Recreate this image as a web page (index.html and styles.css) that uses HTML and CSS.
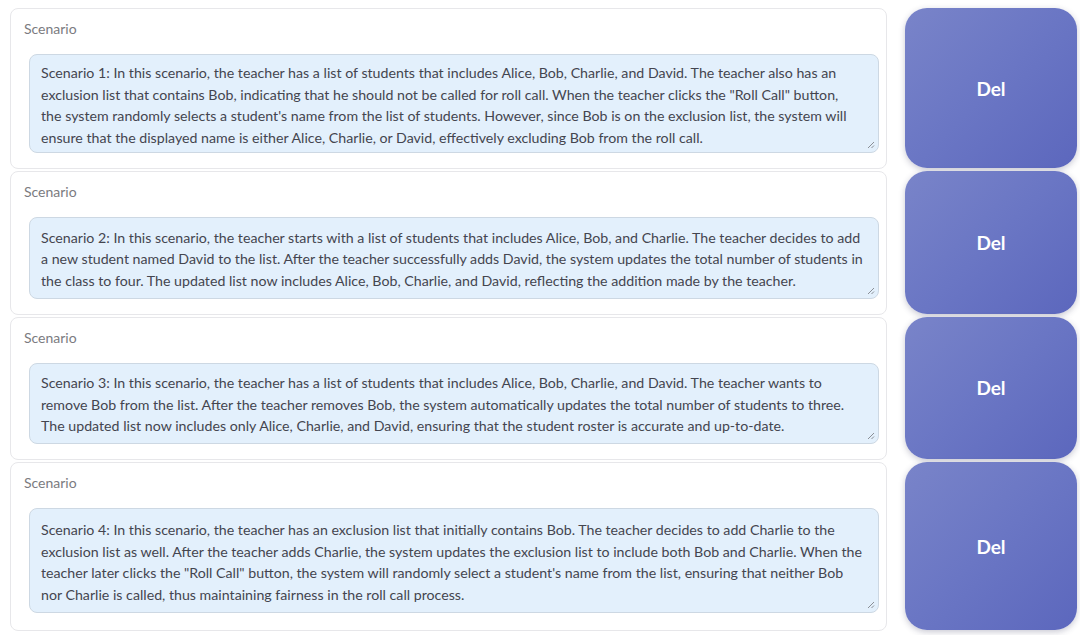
FILE: index.html
```html
<!DOCTYPE html>
<html>
<head>
<meta charset="utf-8">
<link rel="stylesheet" href="styles.css">
</head>
<body>
<div class="list">
  <div class="row">
    <div class="card">
      <div class="label">Scenario</div>
      <div class="box">
        <div class="text">Scenario 1: In this scenario, the teacher has a list of students that includes Alice, Bob, Charlie, and David. The teacher also has an<br>exclusion list that contains Bob, indicating that he should not be called for roll call. When the teacher clicks the "Roll Call" button,<br>the system randomly selects a student's name from the list of students. However, since Bob is on the exclusion list, the system will<br>ensure that the displayed name is either Alice, Charlie, or David, effectively excluding Bob from the roll call.</div>
        <svg class="grip" viewBox="0 0 8 8" width="8" height="8"><path d="M1 7L7 1M4.5 7L7 4.5" stroke="#8a8f96" stroke-width="1" fill="none"/></svg>
      </div>
    </div>
    <button class="del">Del</button>
  </div>
  <div class="row">
    <div class="card">
      <div class="label">Scenario</div>
      <div class="box short">
        <div class="text">Scenario 2: In this scenario, the teacher starts with a list of students that includes Alice, Bob, and Charlie. The teacher decides to add<br>a new student named David to the list. After the teacher successfully adds David, the system updates the total number of students in<br>the class to four. The updated list now includes Alice, Bob, Charlie, and David, reflecting the addition made by the teacher.</div>
        <svg class="grip" viewBox="0 0 8 8" width="8" height="8"><path d="M1 7L7 1M4.5 7L7 4.5" stroke="#8a8f96" stroke-width="1" fill="none"/></svg>
      </div>
    </div>
    <button class="del">Del</button>
  </div>
  <div class="row">
    <div class="card">
      <div class="label">Scenario</div>
      <div class="box short">
        <div class="text">Scenario 3: In this scenario, the teacher has a list of students that includes Alice, Bob, Charlie, and David. The teacher wants to<br>remove Bob from the list. After the teacher removes Bob, the system automatically updates the total number of students to three.<br>The updated list now includes only Alice, Charlie, and David, ensuring that the student roster is accurate and up-to-date.</div>
        <svg class="grip" viewBox="0 0 8 8" width="8" height="8"><path d="M1 7L7 1M4.5 7L7 4.5" stroke="#8a8f96" stroke-width="1" fill="none"/></svg>
      </div>
    </div>
    <button class="del">Del</button>
  </div>
  <div class="row">
    <div class="card last">
      <div class="label">Scenario</div>
      <div class="box tall">
        <div class="text">Scenario 4: In this scenario, the teacher has an exclusion list that initially contains Bob. The teacher decides to add Charlie to the<br>exclusion list as well. After the teacher adds Charlie, the system updates the exclusion list to include both Bob and Charlie. When the<br>teacher later clicks the "Roll Call" button, the system will randomly select a student's name from the list, ensuring that neither Bob<br>nor Charlie is called, thus maintaining fairness in the roll call process.</div>
        <svg class="grip" viewBox="0 0 8 8" width="8" height="8"><path d="M1 7L7 1M4.5 7L7 4.5" stroke="#8a8f96" stroke-width="1" fill="none"/></svg>
      </div>
    </div>
    <button class="del">Del</button>
  </div>
</div>
</body>
</html>
```
FILE: styles.css
```css
html, body {
  margin: 0;
  background: #ffffff;
}
body {
  font-family: Lato, "Noto Sans", sans-serif;
  padding: 8px 3px 4px 10px;
}
.list {
  display: flex;
  flex-direction: column;
  gap: 2px;
}
.row {
  display: flex;
  gap: 18px;
  align-items: stretch;
}
.card {
  flex: 1;
  min-width: 0;
  background: #fff;
  border: 1px solid #e7e7ea;
  border-radius: 8px;
  padding: 11px 7px 15px 13px;
}
.card.last {
  padding-bottom: 17px;
}
.label {
  font-size: 14px;
  line-height: 18px;
  color: #7b7b80;
  margin-bottom: 16px;
}
.box {
  position: relative;
  margin-left: 5px;
  background: #e3f0fc;
  border: 1px solid #cdd8e3;
  border-radius: 8px;
  padding: 7px 11px 4px;
}
.box.short {
  padding-top: 8.5px;
  padding-bottom: 6.5px;
}
.box.tall {
  padding-top: 10px;
  padding-bottom: 7px;
}
.text {
  font-size: 14.2px;
  line-height: 21.5px;
  color: #44454f;
  white-space: nowrap;
}
.grip {
  position: absolute;
  right: 3px;
  bottom: 3px;
}
.del {
  width: 172px;
  flex: none;
  border: none;
  border-radius: 22px;
  background: linear-gradient(135deg, #7984c9 0%, #6a76c4 50%, #5c67bd 100%);
  box-shadow: 0 2px 6px rgba(40, 40, 80, 0.25);
  color: #ffffff;
  font-family: Lato, "Noto Sans", sans-serif;
  font-weight: 700;
  font-size: 19px;
  padding: 0;
  margin-bottom: 1px;
}
```
